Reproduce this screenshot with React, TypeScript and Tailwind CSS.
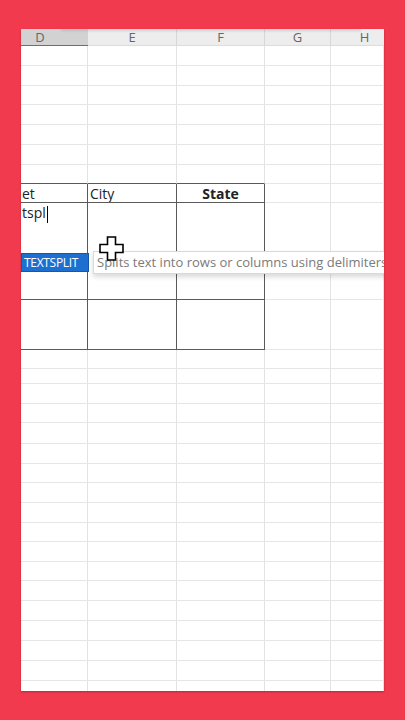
import React from "react";

type RowKind = "plain" | "edge" | "table";
type Row = { h: string; kind: RowKind; content?: React.ReactNode[] };

const COLS = ["w-[67px]", "w-[89px]", "w-[88px]", "w-[66px]", "flex-1"];

const Caret = () => <span className="inline-block w-px h-[17px] bg-black align-middle ml-px" />;

const rows: Row[] = [
  { h: "h-[20px]", kind: "plain" },
  { h: "h-[20px]", kind: "plain" },
  { h: "h-[19px]", kind: "plain" },
  { h: "h-[20px]", kind: "plain" },
  { h: "h-[20px]", kind: "plain" },
  { h: "h-[20px]", kind: "plain" },
  { h: "h-[19px]", kind: "edge" },
  {
    h: "h-[19px]",
    kind: "table",
    content: [
      <span className="block pt-[1px] pl-[1px]">et</span>,
      <span className="block pt-[1px] pl-[2px]">City</span>,
      <span className="block pt-[1px] w-full text-center font-bold">State</span>,
    ],
  },
  {
    h: "h-[97px]",
    kind: "table",
    content: [
      <span className="block pt-[1px] pl-[1px]">
        tspl
        <Caret />
      </span>,
    ],
  },
  { h: "h-[50px]", kind: "table" },
  { h: "h-[19px]", kind: "plain" },
  { h: "h-[15px]", kind: "plain" },
  { h: "h-[20px]", kind: "plain" },
  { h: "h-[19px]", kind: "plain" },
  { h: "h-[21px]", kind: "plain" },
  { h: "h-[20px]", kind: "plain" },
  { h: "h-[19px]", kind: "plain" },
  { h: "h-[20px]", kind: "plain" },
  { h: "h-[20px]", kind: "plain" },
  { h: "h-[19px]", kind: "plain" },
  { h: "h-[20px]", kind: "plain" },
  { h: "h-[19px]", kind: "plain" },
  { h: "h-[20px]", kind: "plain" },
  { h: "h-[20px]", kind: "plain" },
  { h: "h-[20px]", kind: "plain" },
  { h: "h-[20px]", kind: "plain" },
  { h: "h-[20px]", kind: "plain" },
  { h: "h-[20px]", kind: "plain" },
];

function cellClass(kind: RowKind, ci: number) {
  const inTable = ci <= 2;
  const right = kind === "table" && inTable ? "border-r-[#5a5a5a]" : "border-r-[#e3e3e3]";
  const bottom = (kind === "table" || kind === "edge") && inTable ? "border-b-[#5a5a5a]" : "border-b-[#e6e6e6]";
  return `${COLS[ci]} shrink-0 h-full border-r border-b ${right} ${bottom} overflow-hidden whitespace-nowrap`;
}

export default function App() {
  return (
    <div
      className="w-[405px] h-[720px] bg-[#f23a4f] pt-[29px] pl-[21px]"
      style={{ fontFamily: '"Open Sans", "Noto Sans", sans-serif' }}
    >
      <div className="relative w-[363px] h-[662px] bg-white overflow-hidden shadow-[0_1px_2px_rgba(80,0,0,0.35)]">
        {/* column header */}
        <div className="flex h-[17px] text-[13px] leading-[17px] text-[#666]">
          <div className="w-[67px] shrink-0 bg-[#d2d2d2] border-b border-b-[#6e6e6e] text-center pr-[29px]">D</div>
          <div className="w-[89px] shrink-0 bg-[#ededed] border-b border-b-[#dcdcdc] border-r border-r-[#d6d6d6] text-center">E</div>
          <div className="w-[88px] shrink-0 bg-[#ededed] border-b border-b-[#dcdcdc] border-r border-r-[#d6d6d6] text-center">F</div>
          <div className="w-[66px] shrink-0 bg-[#ededed] border-b border-b-[#dcdcdc] border-r border-r-[#d6d6d6] text-center">G</div>
          <div className="flex-1 bg-[#ededed] border-b border-b-[#dcdcdc] text-center pl-[14px]">H</div>
        </div>

        {/* grid */}
        {rows.map((r, ri) => (
          <div key={ri} className={`flex ${r.h} text-[14px] leading-[18px] text-[#222]`}>
            {COLS.map((_, ci) => (
              <div key={ci} className={cellClass(r.kind, ci)}>
                {r.content?.[ci] ?? null}
              </div>
            ))}
          </div>
        ))}

        {/* blurred artifact on top of header */}
        <div className="absolute left-[40px] top-0 w-[300px] h-[2px] bg-[#9a9a9a] opacity-40 blur-[1px]" />

        {/* autocomplete item */}
        <div className="absolute left-0 top-[224px] w-[68px] h-[19px] bg-[#1d6fd0] border border-[#1558a8] text-white text-[12px] leading-[17px] pl-[2px] tracking-tight">
          TEXTSPLIT
        </div>

        {/* tooltip */}
        <div className="absolute left-[72px] top-[222px] w-[330px] h-[23px] bg-white border border-[#d9d9d9] shadow-[0_3px_5px_rgba(0,0,0,0.15)] text-[13px] leading-[21px] text-[#7b7b7b] pl-[3px] whitespace-nowrap">
          Splits text into rows or columns using delimiters
        </div>

        {/* cursor */}
        <svg className="absolute left-[78px] top-[207px]" width="25" height="25" viewBox="0 0 25 25">
          <polygon
            points="8.5,1 16.5,1 16.5,8.5 24,8.5 24,16.5 16.5,16.5 16.5,24 8.5,24 8.5,16.5 1,16.5 1,8.5 8.5,8.5"
            fill="#fff"
            stroke="#000"
            strokeWidth="1.6"
            strokeLinejoin="miter"
          />
        </svg>
      </div>
    </div>
  );
}
